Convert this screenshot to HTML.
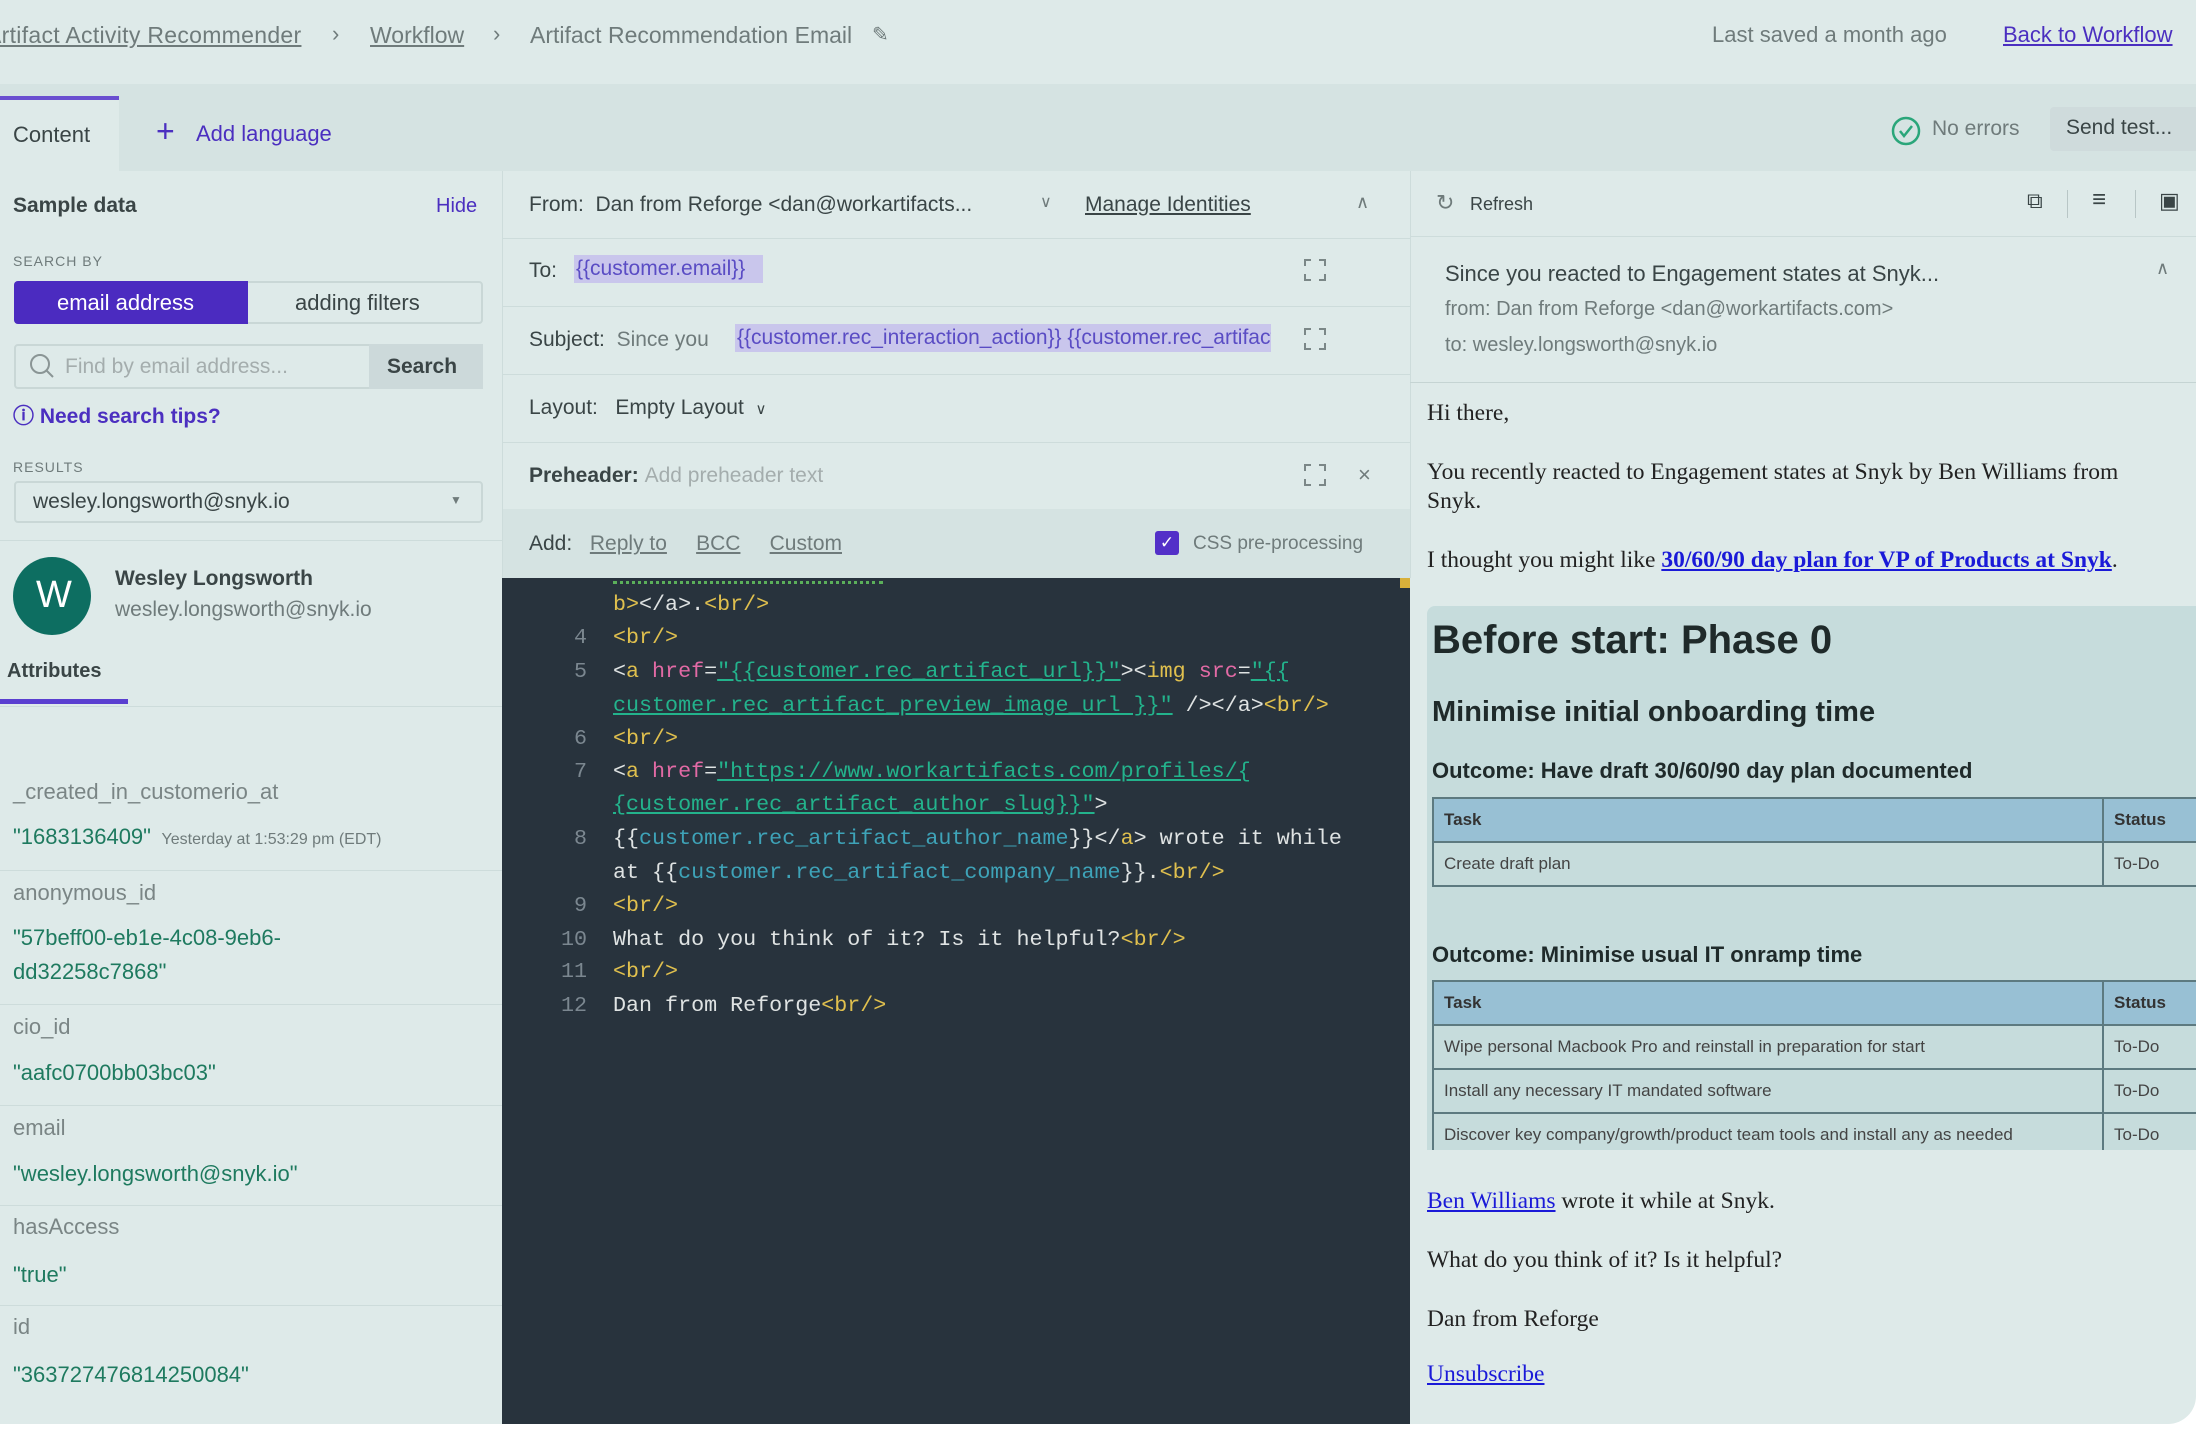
<!DOCTYPE html>
<html><head><meta charset="utf-8"><style>
*{box-sizing:border-box;margin:0;padding:0}
body{width:2200px;height:1429px;background:#fff;font-family:"Liberation Sans",sans-serif;overflow:hidden;position:relative}
#app{position:absolute;left:0;top:0;width:2196px;height:1424px;background:#deeae9;border-radius:0 0 28px 0;overflow:hidden}
.a{position:absolute;white-space:nowrap}
.g{color:#6f7b7b}
.d{color:#3a4546}
.p{color:#4b2fc0}
.u{text-decoration:underline}
.hl{background:#c9c6ec;color:#5a4cc4}
.line{position:absolute;height:1px;background:#cddcdb}
.code{position:absolute;left:502px;top:578px;width:908px;height:846px;background:#28333d;font-family:"Liberation Mono",monospace;font-size:21.7px;color:#dfe3e3}
.code .n{position:absolute;left:55px;color:#7b8790;width:30px;text-align:right}
.code .c{position:absolute;left:111px;white-space:nowrap}
.y{color:#e0c04e}.k{color:#e26aa5}.s{color:#23b38c;text-decoration:underline}.v{color:#3ea3b8}
.em{font-family:"Liberation Serif",serif;font-size:23.5px;color:#222}
.box{position:absolute;left:1427px;top:606px;width:780px;height:544px;background:#c6dcdc;border-radius:8px 0 0 0;overflow:hidden}
table{border-collapse:collapse;position:absolute;left:5px;width:790px;font-size:17px;color:#444}
td{border:2px solid #5d7a80;height:44px;padding-left:10px}
tr.h td{background:#98c0d4;font-weight:bold;color:#333;height:44px}
.attrk{font-size:22px;color:#7a8585}
.attrv{font-size:22px;color:#1e7a5f}
</style></head><body><div id="app">
<!-- top bar -->
<div class="a g u" style="left:-14px;top:22px;font-size:23px;letter-spacing:0.3px">Artifact Activity Recommender</div>
<div class="a g" style="left:332px;top:21px;font-size:22px">&#8250;</div>
<div class="a g u" style="left:370px;top:22px;font-size:23px">Workflow</div>
<div class="a g" style="left:493px;top:21px;font-size:22px">&#8250;</div>
<div class="a g" style="left:530px;top:22px;font-size:23px">Artifact Recommendation Email</div>
<div class="a g" style="left:872px;top:22px;font-size:20px">&#9998;</div>
<div class="a g" style="left:1712px;top:22px;font-size:22px">Last saved a month ago</div>
<div class="a p u" style="left:2003px;top:22px;font-size:22px">Back to Workflow</div>
<!-- tab bar -->
<div style="position:absolute;left:0;top:84px;width:2196px;height:87px;background:#d5e3e2"></div>
<div style="position:absolute;left:0;top:96px;width:119px;height:75px;background:#deeae9;border-top:4px solid #6a4fd0"></div>
<div class="a d" style="left:13px;top:122px;font-size:22px">Content</div>
<div class="a p" style="left:156px;top:113px;font-size:32px;font-weight:300">+</div>
<div class="a p" style="left:196px;top:121px;font-size:22px">Add language</div>
<svg class="a" style="left:1890px;top:115px" width="32" height="32"><circle cx="16" cy="16" r="13" fill="none" stroke="#2aa67a" stroke-width="2.5"/><path d="M10 16l4 5 8-10" fill="none" stroke="#2aa67a" stroke-width="2.5"/></svg>
<div class="a g" style="left:1932px;top:117px;font-size:21px">No errors</div>
<div style="position:absolute;left:2050px;top:107px;width:150px;height:44px;background:#cfdbdc;border-radius:4px"></div>
<div class="a d" style="left:2066px;top:116px;font-size:21px">Send test...</div>
<!-- left panel -->
<div class="a d" style="left:13px;top:194px;font-size:21px;font-weight:bold">Sample data</div>
<div class="a p" style="left:436px;top:195px;font-size:20px">Hide</div>
<div class="a g" style="left:13px;top:253px;font-size:14px;letter-spacing:1px">SEARCH BY</div>
<div style="position:absolute;left:14px;top:281px;width:469px;height:43px;border:2px solid #c9d7d6;border-radius:4px"></div>
<div style="position:absolute;left:14px;top:281px;width:234px;height:43px;background:#4b2bc0;border-radius:4px 0 0 4px"></div>
<div class="a" style="left:57px;top:290px;font-size:22px;color:#fff">email address</div>
<div class="a d" style="left:295px;top:290px;font-size:22px">adding filters</div>
<div style="position:absolute;left:14px;top:344px;width:469px;height:45px;border:2px solid #c9d7d6;border-radius:4px"></div>
<div style="position:absolute;left:369px;top:344px;width:114px;height:45px;background:#ccd9da"></div>
<svg class="a" style="left:28px;top:352px" width="30" height="30"><circle cx="12" cy="12" r="9" fill="none" stroke="#8a9595" stroke-width="2"/><path d="M18 18l7 7" stroke="#8a9595" stroke-width="2"/></svg>
<div class="a" style="left:65px;top:355px;font-size:21px;color:#a4adad">Find by email address...</div>
<div class="a d" style="left:387px;top:355px;font-size:21px;font-weight:bold">Search</div>
<div class="a p" style="left:13px;top:400px;font-size:21px;font-weight:bold">&#9432; Need search tips?</div>
<div class="a g" style="left:13px;top:459px;font-size:14px;letter-spacing:1px">RESULTS</div>
<div style="position:absolute;left:14px;top:481px;width:469px;height:42px;border:2px solid #c9d7d6;border-radius:4px"></div>
<div class="a d" style="left:33px;top:490px;font-size:21px">wesley.longsworth@snyk.io</div>
<div class="a g" style="left:450px;top:493px;font-size:12px">&#9660;</div>
<div class="line" style="left:0;top:540px;width:502px"></div>
<div style="position:absolute;left:13px;top:557px;width:78px;height:78px;border-radius:50%;background:#0d6e61"></div>
<div class="a" style="left:36px;top:574px;font-size:38px;color:#fff">W</div>
<div class="a d" style="left:115px;top:567px;font-size:21px;font-weight:bold">Wesley Longsworth</div>
<div class="a g" style="left:115px;top:598px;font-size:21px">wesley.longsworth@snyk.io</div>
<div class="a d" style="left:7px;top:660px;font-size:20px;font-weight:bold">Attributes</div>
<div style="position:absolute;left:0;top:699px;width:128px;height:5px;background:#5a3fd0"></div>
<div class="line" style="left:0;top:706px;width:502px"></div>
<div class="a attrk" style="left:13px;top:779px">_created_in_customerio_at</div>
<div class="a attrv" style="left:13px;top:824px">"1683136409" <span style="font-size:16px;color:#6f7b7b">&nbsp;Yesterday at 1:53:29 pm (EDT)</span></div>
<div class="line" style="left:0;top:870px;width:502px"></div>
<div class="a attrk" style="left:13px;top:880px">anonymous_id</div>
<div class="a attrv" style="left:13px;top:925px">"57beff00-eb1e-4c08-9eb6-</div>
<div class="a attrv" style="left:13px;top:959px">dd32258c7868"</div>
<div class="line" style="left:0;top:1004px;width:502px"></div>
<div class="a attrk" style="left:13px;top:1014px">cio_id</div>
<div class="a attrv" style="left:13px;top:1060px">"aafc0700bb03bc03"</div>
<div class="line" style="left:0;top:1105px;width:502px"></div>
<div class="a attrk" style="left:13px;top:1115px">email</div>
<div class="a attrv" style="left:13px;top:1161px">"wesley.longsworth@snyk.io"</div>
<div class="line" style="left:0;top:1205px;width:502px"></div>
<div class="a attrk" style="left:13px;top:1214px">hasAccess</div>
<div class="a attrv" style="left:13px;top:1262px">"true"</div>
<div class="line" style="left:0;top:1305px;width:502px"></div>
<div class="a attrk" style="left:13px;top:1314px">id</div>
<div class="a attrv" style="left:13px;top:1362px">"363727476814250084"</div>
<!-- middle -->
<div style="position:absolute;left:502px;top:171px;width:1px;height:407px;background:#cddcdb"></div>
<div class="a d" style="left:529px;top:193px;font-size:21px">From:&nbsp; Dan from Reforge &lt;dan@workartifacts...</div>
<div class="a g" style="left:1040px;top:192px;font-size:16px">&#8744;</div>
<div class="a d u" style="left:1085px;top:193px;font-size:21px">Manage Identities</div>
<div class="a g" style="left:1356px;top:192px;font-size:18px">&#8743;</div>
<div class="line" style="left:502px;top:238px;width:908px"></div>
<div class="a d" style="left:529px;top:259px;font-size:21px">To:</div>
<div class="a hl" style="left:574px;top:255px;width:189px;overflow:hidden;font-size:21px;padding:2px 2px">{{customer.email}}</div>
<div class="line" style="left:502px;top:306px;width:908px"></div>
<div class="a d" style="left:529px;top:328px;font-size:21px">Subject:&nbsp; <span class="g">Since you</span></div>
<div class="a hl" style="left:735px;top:324px;width:536px;overflow:hidden;font-size:21px;padding:2px 2px">{{customer.rec_interaction_action}} {{customer.rec_artifact</div>
<div class="line" style="left:502px;top:374px;width:908px"></div>
<div class="a d" style="left:529px;top:396px;font-size:21px">Layout:&nbsp;&nbsp; Empty Layout&nbsp; <span style="font-size:15px">&#8744;</span></div>
<div class="line" style="left:502px;top:442px;width:908px"></div>
<div class="a d" style="left:529px;top:464px;font-size:21px;font-weight:bold">Preheader: <span style="font-weight:normal;color:#a4adad">Add preheader text</span></div>
<div class="a g" style="left:1358px;top:462px;font-size:22px">&#215;</div>
<svg class="a" style="left:1303px;top:258px" width="24" height="24"><path d="M2 8V2h6M16 2h6v6M22 16v6h-6M8 22H2v-6" fill="none" stroke="#7b8787" stroke-width="2"/></svg>
<svg class="a" style="left:1303px;top:327px" width="24" height="24"><path d="M2 8V2h6M16 2h6v6M22 16v6h-6M8 22H2v-6" fill="none" stroke="#7b8787" stroke-width="2"/></svg>
<svg class="a" style="left:1303px;top:463px" width="24" height="24"><path d="M2 8V2h6M16 2h6v6M22 16v6h-6M8 22H2v-6" fill="none" stroke="#7b8787" stroke-width="2"/></svg>
<div style="position:absolute;left:503px;top:509px;width:907px;height:69px;background:#d5e3e2"></div>
<div class="a d" style="left:529px;top:532px;font-size:21px">Add:&nbsp; <span class="u g" style="margin-left:6px">Reply to</span>&nbsp;&nbsp;&nbsp;&nbsp; <span class="u g">BCC</span>&nbsp;&nbsp;&nbsp;&nbsp; <span class="u g">Custom</span></div>
<div style="position:absolute;left:1155px;top:531px;width:24px;height:24px;background:#5330c8;border-radius:3px;color:#fff;font-size:17px;text-align:center;line-height:24px">&#10003;</div>
<div class="a g" style="left:1193px;top:533px;font-size:19px">CSS pre-processing</div>
<div class="code">
<div style="position:absolute;left:111px;top:0;width:270px;height:6px;border-bottom:3px dotted #5bb05a"></div>
<div style="position:absolute;left:898px;top:0;width:10px;height:10px;background:#d8b03a"></div>
<div class="c" style="top:14px"><span class="y">b&gt;</span>&lt;/a&gt;.<span class="y">&lt;br/&gt;</span></div>
<div class="n" style="top:47px">4</div><div class="c" style="top:47px"><span class="y">&lt;br/&gt;</span></div>
<div class="n" style="top:81px">5</div><div class="c" style="top:81px">&lt;<span class="y">a</span> <span class="k">href</span>=<span class="s">"{{customer.rec_artifact_url}}"</span>&gt;&lt;<span class="y">img</span> <span class="k">src</span>=<span class="s">"{{</span></div>
<div class="c" style="top:115px"><span class="s">customer.rec_artifact_preview_image_url }}"</span> /&gt;&lt;/a&gt;<span class="y">&lt;br/&gt;</span></div>
<div class="n" style="top:148px">6</div><div class="c" style="top:148px"><span class="y">&lt;br/&gt;</span></div>
<div class="n" style="top:181px">7</div><div class="c" style="top:181px">&lt;<span class="y">a</span> <span class="k">href</span>=<span class="s">"https://www.workartifacts.com/profiles/{</span></div>
<div class="c" style="top:214px"><span class="s">{customer.rec_artifact_author_slug}}"</span>&gt;</div>
<div class="n" style="top:248px">8</div><div class="c" style="top:248px">{{<span class="v">customer.rec_artifact_author_name</span>}}&lt;/<span class="y">a</span>&gt; wrote it while</div>
<div class="c" style="top:282px">at {{<span class="v">customer.rec_artifact_company_name</span>}}.<span class="y">&lt;br/&gt;</span></div>
<div class="n" style="top:315px">9</div><div class="c" style="top:315px"><span class="y">&lt;br/&gt;</span></div>
<div class="n" style="top:349px">10</div><div class="c" style="top:349px">What do you think of it? Is it helpful?<span class="y">&lt;br/&gt;</span></div>
<div class="n" style="top:381px">11</div><div class="c" style="top:381px"><span class="y">&lt;br/&gt;</span></div>
<div class="n" style="top:415px">12</div><div class="c" style="top:415px">Dan from Reforge<span class="y">&lt;br/&gt;</span></div>
</div>
<!-- right -->
<div style="position:absolute;left:1410px;top:171px;width:1px;height:407px;background:#cddcdb"></div>
<div class="a g" style="left:1436px;top:190px;font-size:22px">&#8635;</div>
<div class="a d" style="left:1470px;top:194px;font-size:18px">Refresh</div>
<div class="a d" style="left:2027px;top:188px;font-size:22px">&#10697;</div>
<div style="position:absolute;left:2067px;top:190px;width:1px;height:28px;background:#b8c6c6"></div>
<div class="a d" style="left:2092px;top:186px;font-size:24px">&#8801;</div>
<div style="position:absolute;left:2135px;top:190px;width:1px;height:28px;background:#b8c6c6"></div>
<div class="a d" style="left:2159px;top:188px;font-size:22px">&#9635;</div>
<div class="line" style="left:1410px;top:236px;width:790px"></div>
<div class="a d" style="left:1445px;top:261px;font-size:22px">Since you reacted to Engagement states at Snyk...</div>
<div class="a g" style="left:1445px;top:298px;font-size:20px">from: Dan from Reforge &lt;dan@workartifacts.com&gt;</div>
<div class="a g" style="left:1445px;top:334px;font-size:20px">to: wesley.longsworth@snyk.io</div>
<div class="a g" style="left:2156px;top:258px;font-size:18px">&#8743;</div>
<div class="line" style="left:1410px;top:382px;width:790px;background:#c5d4d3"></div>
<div class="a em" style="left:1427px;top:400px">Hi there,</div>
<div class="a em" style="left:1427px;top:459px">You recently reacted to Engagement states at Snyk by Ben Williams from</div>
<div class="a em" style="left:1427px;top:488px">Snyk.</div>
<div class="a em" style="left:1427px;top:547px">I thought you might like <b style="color:#1a1ad8;text-decoration:underline">30/60/90 day plan for VP of Products at Snyk</b>.</div>
<div class="box">
<div class="a" style="left:5px;top:12px;font-size:40px;font-weight:bold;color:#1f2a2a">Before start: Phase 0</div>
<div class="a" style="left:5px;top:90px;font-size:29px;font-weight:bold;color:#1f2a2a">Minimise initial onboarding time</div>
<div class="a" style="left:5px;top:152px;font-size:22px;font-weight:bold;color:#1f2a2a">Outcome: Have draft 30/60/90 day plan documented</div>
<table style="top:191px"><tr class="h"><td style="width:670px">Task</td><td>Status</td></tr><tr><td>Create draft plan</td><td>To-Do</td></tr></table>
<div class="a" style="left:5px;top:336px;font-size:22px;font-weight:bold;color:#1f2a2a">Outcome: Minimise usual IT onramp time</div>
<table style="top:374px"><tr class="h"><td style="width:670px">Task</td><td>Status</td></tr><tr><td>Wipe personal Macbook Pro and reinstall in preparation for start</td><td>To-Do</td></tr><tr><td>Install any necessary IT mandated software</td><td>To-Do</td></tr><tr><td>Discover key company/growth/product team tools and install any as needed</td><td>To-Do</td></tr></table>
</div>
<div class="a em" style="left:1427px;top:1188px"><span style="color:#1a1ad8;text-decoration:underline">Ben Williams</span> wrote it while at Snyk.</div>
<div class="a em" style="left:1427px;top:1247px">What do you think of it? Is it helpful?</div>
<div class="a em" style="left:1427px;top:1306px">Dan from Reforge</div>
<div class="a em" style="left:1427px;top:1361px;color:#1a1ad8;text-decoration:underline">Unsubscribe</div>
</div></body></html>
